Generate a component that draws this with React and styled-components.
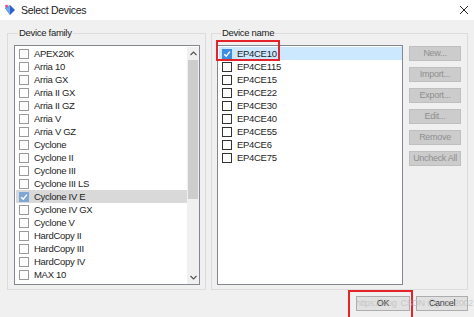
import React from "react";
import styled, { createGlobalStyle } from "styled-components";

const GlobalStyle = createGlobalStyle`
  html, body {
    margin: 0;
    padding: 0;
    background: #f0f0f0;
  }
  * {
    box-sizing: border-box;
  }
`;

const families = [
  "APEX20K", "Arria 10", "Arria GX", "Arria II GX", "Arria II GZ", "Arria V",
  "Arria V GZ", "Cyclone", "Cyclone II", "Cyclone III", "Cyclone III LS",
  "Cyclone IV E", "Cyclone IV GX", "Cyclone V", "HardCopy II", "HardCopy III",
  "HardCopy IV", "MAX 10",
];

const devices = [
  "EP4CE10", "EP4CE115", "EP4CE15", "EP4CE22", "EP4CE30",
  "EP4CE40", "EP4CE55", "EP4CE6", "EP4CE75",
];

const sideButtons = ["New...", "Import...", "Export...", "Edit...", "Remove", "Uncheck All"];

const Window = styled.div`
  position: relative;
  width: 474px;
  height: 317px;
  overflow: hidden;
  display: flex;
  flex-direction: column;
  background: #f0f0f0;
  font-family: "Liberation Sans", Arial, sans-serif;
  letter-spacing: -0.3px;
  color: #1e1e1e;
`;

const TitleBar = styled.div`
  height: 20px;
  flex: none;
  background: #fff;
  display: flex;
  align-items: center;
  padding: 0 5px 0 4px;
  gap: 5px;
`;

const Title = styled.span`
  flex: 1;
  font-size: 10.5px;
  color: #222;
`;

const Body = styled.div`
  flex: 1;
  display: flex;
  flex-direction: column;
  padding: 7px 6px 0 7px;
`;

const Groups = styled.div`
  display: grid;
  grid-template-columns: 199px 257px;
  gap: 5px;
`;

const Group = styled.fieldset`
  margin: 0;
  height: 263px;
  border: 1px solid #dcdcdc;
  padding: 0 ${(p) => p.$padRight}px 4px ${(p) => p.$padLeft}px;
  display: flex;
  gap: 6px;
  align-items: flex-start;
  min-width: 0;
`;

const Legend = styled.legend`
  font-size: 9.5px;
  line-height: 12px;
  padding: 0 1px;
  margin-left: 4px;
  color: #222;
`;

const ListBox = styled.div`
  position: relative;
  width: 186px;
  height: 240px;
  margin-top: 6px;
  background: #fff;
  border: 1px solid #828790;
  padding-top: 1px;
  display: flex;
  overflow: hidden;
`;

const Rows = styled.div`
  flex: 1;
  display: flex;
  flex-direction: column;
  padding-left: 1px;
`;

const Row = styled.div`
  height: 13px;
  display: flex;
  align-items: center;
  gap: 5px;
  padding-left: 3px;
  font-size: 9.5px;
  white-space: nowrap;
  background: ${(p) => p.$bg || "transparent"};
`;

const Box = styled.span`
  width: 10px;
  height: 10px;
  flex: none;
  border: 1px solid ${(p) => (p.$checked ? p.$tone : p.$border)};
  background: ${(p) => (p.$checked ? p.$tone : "#fff")};
  display: flex;
  align-items: center;
  justify-content: center;
`;

const ScrollBar = styled.div`
  width: 12px;
  flex: none;
  display: flex;
  flex-direction: column;
  background: #f0f0f0;
`;

const Arrow = styled.div`
  height: 13px;
  display: flex;
  align-items: center;
  justify-content: center;
`;

const Thumb = styled.div`
  height: 139px;
  margin: 0 1px;
  background: #cdcdcd;
`;

const Track = styled.div`
  flex: 1;
`;

const SideButtons = styled.div`
  display: flex;
  flex-direction: column;
  gap: 6px;
  margin-top: 7px;
`;

const Button = styled.button`
  width: ${(p) => p.$w || 52}px;
  height: 15px;
  padding: 0;
  font-family: inherit;
  letter-spacing: -0.3px;
  font-size: 9px;
  line-height: 13px;
  white-space: nowrap;
  overflow: hidden;
  border: 1px solid ${(p) => (p.disabled ? "#bfbfbf" : "#adadad")};
  background: ${(p) => (p.disabled ? "#cccccc" : "#e1e1e1")};
  color: ${(p) => (p.disabled ? "#8f8f8f" : "#1e1e1e")};
`;

const Footer = styled.div`
  display: flex;
  justify-content: flex-end;
  gap: 6px;
  padding-top: 6px;
`;

const Mark = styled.div`
  position: absolute;
  left: ${(p) => p.$x}px;
  top: ${(p) => p.$y}px;
  width: ${(p) => p.$w}px;
  height: ${(p) => p.$h}px;
  border: 2px solid #e3242b;
  pointer-events: none;
`;

const Watermark = styled.div`
  position: absolute;
  left: 356px;
  top: 298px;
  display: flex;
  gap: 4px;
  font-size: 9px;
  color: rgba(185, 185, 185, 0.7);
  white-space: nowrap;
  pointer-events: none;
`;

function Check({ checked, tone = "#3d8ee3", border = "#8d8d8d" }) {
  return (
    <Box $checked={checked} $tone={tone} $border={border}>
      {checked && (
        <svg width="8" height="8" viewBox="0 0 8 8">
          <path d="M1.2 4.2 L3.2 6.1 L6.9 1.6" fill="none" stroke="#fff" strokeWidth="1.4" />
        </svg>
      )}
    </Box>
  );
}

function Logo() {
  return (
    <svg width="12" height="12" viewBox="0 0 12 12">
      <path d="M1 4 L6 1 L11 6 L6 11 Z" fill="#2d63c8" />
      <path d="M1 4 L6 1 L6 11 Z" fill="#6fa6ee" />
      <path d="M1 1.5 L3.5 0.5 L4 3 L1.8 3.8 Z" fill="#e0457a" />
    </svg>
  );
}

function CloseIcon() {
  return (
    <svg width="10" height="10" viewBox="0 0 10 10">
      <path d="M1 1 L9 9 M9 1 L1 9" stroke="#222" strokeWidth="1" />
    </svg>
  );
}

export default function App() {
  return (
    <Window>
      <GlobalStyle />
      <TitleBar>
        <Logo />
        <Title>Select Devices</Title>
        <CloseIcon />
      </TitleBar>
      <Body>
        <Groups>
          <Group $padLeft={6} $padRight={5}>
            <Legend>Device family</Legend>
            <ListBox>
              <Rows>
                {families.map((f) => (
                  <Row key={f} $bg={f === "Cyclone IV E" ? "#d9d9d9" : null}>
                    <Check checked={f === "Cyclone IV E"} tone="#7ea6d6" border="#9a9a9a" />
                    {f}
                  </Row>
                ))}
              </Rows>
              <ScrollBar>
                <Arrow>
                  <svg width="7" height="5" viewBox="0 0 7 5">
                    <path d="M0.5 4 L3.5 1 L6.5 4" fill="none" stroke="#555" strokeWidth="1.2" />
                  </svg>
                </Arrow>
                <Thumb />
                <Track />
                <Arrow>
                  <svg width="7" height="5" viewBox="0 0 7 5">
                    <path d="M0.5 1 L3.5 4 L6.5 1" fill="none" stroke="#555" strokeWidth="1.2" />
                  </svg>
                </Arrow>
              </ScrollBar>
            </ListBox>
          </Group>
          <Group $padLeft={5} $padRight={6}>
            <Legend>Device name</Legend>
            <ListBox>
              <Rows>
                {devices.map((d, i) => (
                  <Row key={d} $bg={i === 0 ? "#cce8ff" : null}>
                    <Check checked={i === 0} border="#333" />
                    {d}
                  </Row>
                ))}
              </Rows>
            </ListBox>
            <SideButtons>
              {sideButtons.map((b) => (
                <Button key={b} disabled>
                  {b}
                </Button>
              ))}
            </SideButtons>
          </Group>
        </Groups>
        <Footer>
          <Button $w={54}>OK</Button>
          <Button $w={52}>Cancel</Button>
        </Footer>
      </Body>
      <Mark $x={216} $y={40} $w={64} $h={21} />
      <Mark $x={348} $y={290} $w={65} $h={30} />
      <Watermark>
        <span>https://blog</span>
        <span>CSDN @yuan2002</span>
      </Watermark>
    </Window>
  );
}
